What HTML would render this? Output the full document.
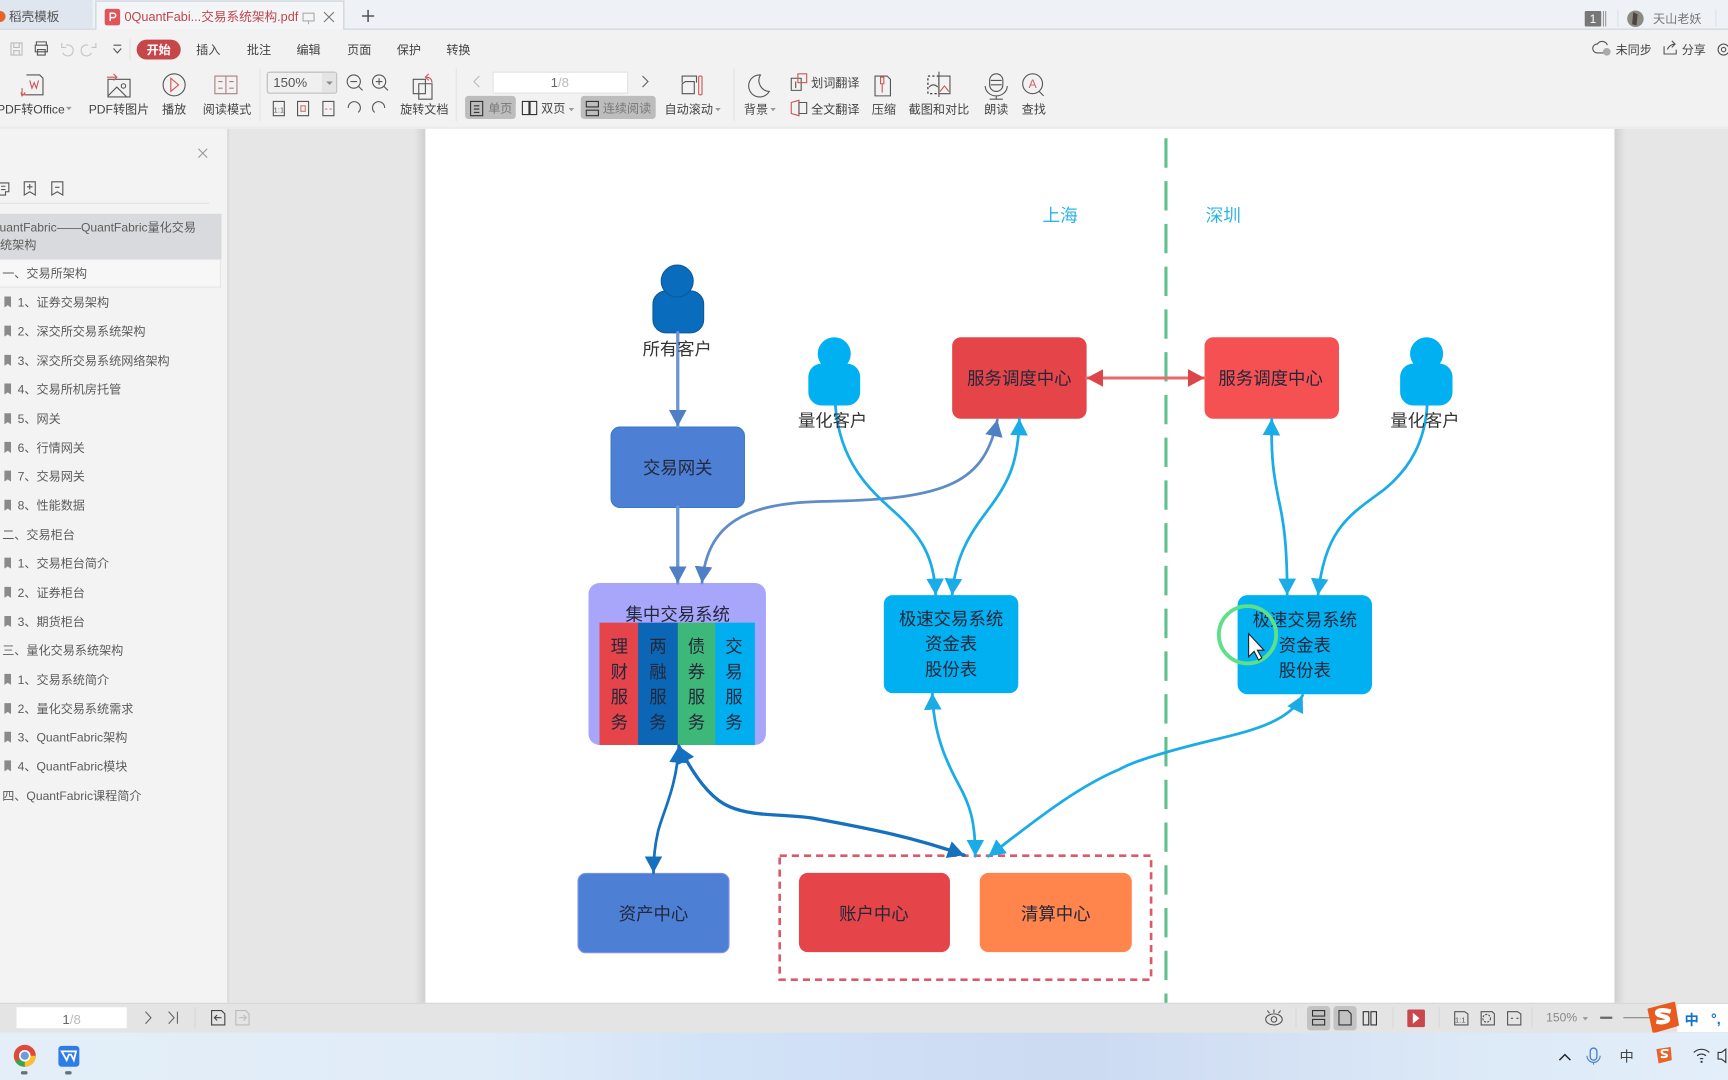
<!DOCTYPE html>
<html lang="zh">
<head>
<meta charset="utf-8">
<title>0QuantFabric 交易系统架构</title>
<style>
html,body{margin:0;padding:0;width:1728px;height:1080px;overflow:hidden;background:#e6e6e6}
svg{display:block;font-family:"Liberation Sans","Noto Sans CJK SC",sans-serif;filter:blur(.35px)}
.t{font-size:11px;fill:#444;text-anchor:middle}
.s{font-size:11px;fill:#5c5c5c}
.d{font-size:15.8px;fill:#23273a;text-anchor:middle}
.i{fill:none;stroke:#555;stroke-width:1}
.r{fill:none;stroke:#c55;stroke-width:1}
.bm{fill:#8a8a8a}
</style>
</head>
<body>
<svg width="1728" height="1080" viewBox="0 0 1568 980" xmlns="http://www.w3.org/2000/svg">
<defs>
<linearGradient id="task" x1="0" x2="1" y1="0" y2="0">
<stop offset="0" stop-color="#e3eef8"/><stop offset=".28" stop-color="#e0ecf8"/><stop offset=".42" stop-color="#d2e2f7"/><stop offset=".62" stop-color="#ccdaf2"/><stop offset=".85" stop-color="#dce9f7"/><stop offset="1" stop-color="#e3eef9"/>
</linearGradient>
<linearGradient id="shL" x1="0" x2="1" y1="0" y2="0"><stop offset="0" stop-color="#e6e6e6"/><stop offset="1" stop-color="#cfcfcf"/></linearGradient>
<linearGradient id="shR" x1="0" x2="1" y1="0" y2="0"><stop offset="0" stop-color="#cfcfcf"/><stop offset="1" stop-color="#e6e6e6"/></linearGradient>
<marker id="c" markerUnits="userSpaceOnUse" markerWidth="18" markerHeight="18" refX="15" refY="8" orient="auto-start-reverse"><path d="M0 0L15 8L0 16z" fill="#19ace6"/></marker>
<marker id="k" markerUnits="userSpaceOnUse" markerWidth="18" markerHeight="18" refX="15" refY="8" orient="auto-start-reverse"><path d="M0 0L15 8L0 16z" fill="#1670c0"/></marker>
<marker id="b" markerUnits="userSpaceOnUse" markerWidth="18" markerHeight="18" refX="15" refY="8" orient="auto-start-reverse"><path d="M0 0L15 8L0 16z" fill="#4f7fc4"/></marker>
<marker id="e" markerUnits="userSpaceOnUse" markerWidth="18" markerHeight="18" refX="15" refY="8" orient="auto-start-reverse"><path d="M0 0L15 8L0 16z" fill="#dc464b"/></marker>
</defs>

<!-- base -->
<rect width="1568" height="980" fill="#e6e6e6"/>
<!-- title bar -->
<rect width="1568" height="27" fill="#eef2f6"/>
<rect y="26" width="1568" height="1" fill="#c9d0da"/>
<rect width="84" height="26" fill="#dfe6f0"/>
<circle cx="0" cy="15" r="5" fill="#e8622a"/>
<text x="8" y="19" font-size="11.5" fill="#555">稻壳模板</text>
<path d="M87 27V1H312V27" fill="#f3f5f7" stroke="#c9d0da"/>
<rect x="95" y="8" width="14" height="15" rx="2" fill="#e0555a"/>
<path d="M100 19v-7h3a2 2 0 010 4h-3" fill="none" stroke="#fff" stroke-width="1.3"/>
<text x="113" y="19" font-size="11.5" fill="#c0464a">0QuantFabi...交易系统架构.pdf</text>
<path d="M275 12h10v7h-10zM280 19v3" fill="none" stroke="#aaa"/>
<path d="M294 11l9 9M303 11l-9 9" fill="none" stroke="#777"/>
<path d="M334 9v11M328.500 14.500h11" fill="none" stroke="#555" stroke-width="1.400"/>
<rect x="1438" y="10" width="15" height="14" rx="1" fill="#777"/>
<text x="1445.500" y="21" font-size="10.500" fill="#fff" text-anchor="middle">1</text>
<path d="M1455 10v14M1457 10v14" stroke="#999" fill="none"/>
<path d="M1468 9v15M1557 9v15" stroke="#dde2e8" fill="none"/>
<circle cx="1484" cy="17" r="7.500" fill="#8d8a83"/><path d="M1482 11l4 2-1 10-4-1z" fill="#4c4640"/>
<text x="1500" y="21" font-size="11" fill="#777">天山老妖</text>

<!-- toolbar -->
<rect y="27" width="1568" height="90" fill="#f2f2f2"/>
<rect y="115" width="1568" height="2" fill="#ececec"/>
<path d="M10 39h10v11h-10zM12.500 39v4h5v-4M12.500 50v-4h5v4" fill="none" stroke="#bbb"/>
<path d="M33 41v-3h9v3M32 41h11v6h-11zM34 45h7v5h-7z" class="i"/>
<path d="M60 41a5 5 0 11-3 7M56 39v4h4" fill="none" stroke="#c4c4c4"/>
<path d="M80 41a5 5 0 103 7M87 39v4h-4" fill="none" stroke="#c4c4c4"/>
<path d="M103 41h7M103 44l3.500 4 3.500-4" class="i"/>
<path d="M118 35v20" stroke="#e2e2e2"/>
<rect x="124" y="36" width="40" height="18" rx="9" fill="#c7464a"/>
<text x="144" y="49" font-size="11" fill="#fff" text-anchor="middle" font-weight="700">开始</text>
<text class="t" x="189" y="49">插入</text><text class="t" x="235" y="49">批注</text><text class="t" x="280" y="49">编辑</text><text class="t" x="326" y="49">页面</text><text class="t" x="371" y="49">保护</text><text class="t" x="416" y="49">转换</text>
<path d="M1449 48a4 4 0 01.500-8 5 5 0 019 1M1449 48h6" class="i"/><circle cx="1458" cy="47" r="3.500" fill="#aaa"/>
<text x="1466" y="49" font-size="11" fill="#444">未同步</text>
<path d="M1510 42v7h11v-4M1513 45c1-3 4-5 7-5M1517 37l3 3-3 3" class="i"/>
<text x="1526" y="49" font-size="11" fill="#444">分享</text>
<circle cx="1564" cy="45" r="5" class="i"/><circle cx="1564" cy="45" r="2" class="i"/>

<!-- big icons -->
<path d="M24 68h12l3 3v15h-16" class="i"/><path d="M27 73l2 7 2-5 2 5 2-7" class="r"/><path d="M20 80v6h6M23 84l-3 3-1-3" class="r"/>
<text class="t" x="28" y="103">PDF转Office</text><path d="M60 97l5 0-2.500 3z" fill="#999"/>
<path d="M98 72h20v16h-20z" class="i"/><circle cx="112" cy="78" r="2" class="i"/><path d="M98 87l8-8 9 9" class="i"/><path d="M97 70h8M103 67l3 3-3 3" class="r"/>
<text class="t" x="108" y="103">PDF转图片</text>
<circle cx="158" cy="77" r="10" class="i"/><path d="M155 71l7 6-7 6z" class="r"/>
<text class="t" x="158" y="103">播放</text>
<path d="M195 69h10v16h-10zM205 69h10v16h-10zM198 74h4M198 80h4M208 74h4M208 80h4" fill="none" stroke="#aa8080"/>
<text class="t" x="206" y="103">阅读模式</text>
<path d="M236 62v48" stroke="#e4e4e4"/>
<rect x="242.500" y="65.500" width="63" height="19" rx="2" fill="#f0f0f0" stroke="#b9b9b9"/>
<rect x="292" y="66" width="13" height="18" fill="#e4e4e4"/><path d="M296 74h6l-3 3z" fill="#888"/>
<text x="248" y="79" font-size="12" fill="#555">150%</text>
<circle cx="321" cy="74" r="6" class="i"/><path d="M318 74h6M325 78l4 4" class="i"/>
<circle cx="344" cy="74" r="6" class="i"/><path d="M341 74h6M344 71v6M348 78l4 4" class="i"/>
<path d="M248 92h10v13h-10zM270 92h10v13h-10zM293 92h10v13h-10z" class="i"/>
<text x="253" y="102" font-size="7" fill="#555" text-anchor="middle">1:1</text>
<path d="M273 96h4v5h-4z" fill="none" stroke="#c77"/>
<path d="M295 99h2M299 99h2" stroke="#c77"/>
<path d="M316 98a5.500 5.500 0 119 4M340 102a5.500 5.500 0 119-4" class="i"/>
<path d="M375 72h11v13h-11zM380 76h12v14h-12z" class="i"/><path d="M387 70c3 0 5 2 5 5M389 67l-3 3 3 3" class="r"/>
<text class="t" x="385" y="103">旋转文档</text>
<path d="M414 62v48" stroke="#e4e4e4"/>
<path d="M435 69l-5 5 5 5" fill="none" stroke="#bbb"/>
<rect x="447.500" y="65.500" width="122" height="19" fill="#fff" stroke="#e2e2e2"/>
<text x="508" y="79" font-size="12" fill="#666" text-anchor="middle">1<tspan fill="#bbb">/8</tspan></text>
<path d="M583 69l5 5-5 5" fill="none" stroke="#666"/>
<rect x="422" y="87" width="46" height="21" rx="3" fill="#bdbdbd"/>
<path d="M427 92h11v13h-11zM430 96h5M430 99h5M430 102h5" fill="none" stroke="#333"/>
<text x="443" y="102" font-size="11" fill="#777">单页</text>
<path d="M474 92h6v12h-6zM481 92h6v12h-6z" fill="none" stroke="#333"/>
<text x="491" y="102" font-size="11" fill="#444">双页</text><path d="M516 98h5l-2.500 3z" fill="#999"/>
<rect x="527" y="87" width="68" height="21" rx="3" fill="#bdbdbd"/>
<path d="M532 92h11v5h-11zM532 100h11v5h-11z" fill="none" stroke="#333"/>
<text x="547" y="102" font-size="11" fill="#777">连续阅读</text>
<path d="M619 75v-6h13v6M619 85v-9l3-2h8v11z" class="i"/><rect x="634" y="69" width="3" height="17" rx="1" class="r"/>
<text class="t" x="625" y="103">自动滚动</text><path d="M649 98h5l-2.500 3z" fill="#999"/>
<path d="M666 62v48" stroke="#e4e4e4"/>
<path d="M690 68a10 10 0 1 0 8 15a10 10 0 0 1-8-15z" class="i"/>
<text class="t" x="686" y="103">背景</text><path d="M699 98h5l-2.500 3z" fill="#999"/>
<path d="M718 71h9v11h-9zM722 74v6" class="i"/><rect x="724" y="67" width="8" height="8" class="r"/>
<path d="M718 93l7-2v14l-7-2z" class="r"/><path d="M725 93h7v10h-7z" class="i"/>
<text x="736" y="79" font-size="11" fill="#444">划词翻译</text>
<text x="736" y="103" font-size="11" fill="#444">全文翻译</text>
<path d="M794 69h11l3 3v15h-14z" class="i"/><path d="M799 70h3v6h-3zM800.500 76v8" class="r"/>
<text class="t" x="802" y="103">压缩</text>
<path d="M842 69h10v16h-10z" fill="none" stroke="#222" stroke-dasharray="2 2"/><path d="M852 69h10v16h-10z" class="i"/><path d="M852 65v23" class="i"/><path d="M853 83l4-5 4 5" class="r"/><path d="M843 79q4-4 8 0" class="i"/>
<text class="t" x="852" y="103">截图和对比</text>
<rect x="898" y="67" width="12" height="16" rx="6" class="i"/><path d="M894 78a10 9 0 0020 0M904 87v3M898 90h12M899 73h10M899 77h10" class="i"/>
<text class="t" x="904" y="103">朗读</text>
<circle cx="937" cy="76" r="9" class="i"/><path d="M943 83l4 4" class="i" stroke-width="2"/>
<text x="937" y="80" font-size="11" fill="#c66" text-anchor="middle">A</text>
<text class="t" x="938" y="103">查找</text>

<!-- sidebar -->
<rect y="117" width="206" height="793" fill="#f3f3f3"/>
<rect x="206" y="117" width="2" height="793" fill="#dcdcdc"/>
<path d="M180 135l8 8M188 135l-8 8" fill="none" stroke="#999"/>
<path d="M-3 166h11v8h-3v3h-5M1 169h4M1 172h4" class="i" />
<path d="M22 165h10v12l-5-3-5 3zM27 167v5M24.500 169.500h5" class="i"/>
<path d="M47 165h10v12l-5-3-5 3zM50 170h4" class="i"/>
<path d="M0 184.500h190" stroke="#e2e2e2"/>
<rect y="194" width="201" height="41" fill="#d9dadd"/>
<text class="s" x="-9" y="210">QuantFabric——QuantFabric量化交易</text>
<text class="s" x="-11" y="226">系统架构</text>
<rect x="-1" y="235.500" width="201" height="25" fill="#f7f7f7" stroke="#e6e6e6"/>
<text class="s" x="2" y="252">一、交易所架构</text>
<path class="bm" d="M4 269h6v10l-3-2-3 2zM4 295.500h6v10l-3-2-3 2zM4 322h6v10l-3-2-3 2zM4 348h6v10l-3-2-3 2zM4 375h6v10l-3-2-3 2zM4 401h6v10l-3-2-3 2zM4 427h6v10l-3-2-3 2zM4 453.500h6v10l-3-2-3 2zM4 506h6v10l-3-2-3 2zM4 532.500h6v10l-3-2-3 2zM4 559h6v10l-3-2-3 2zM4 611.500h6v10l-3-2-3 2zM4 638h6v10l-3-2-3 2zM4 664h6v10l-3-2-3 2zM4 690h6v10l-3-2-3 2z"/>
<text class="s" x="16" y="278">1、证券交易架构</text>
<text class="s" x="16" y="304.500">2、深交所交易系统架构</text>
<text class="s" x="16" y="331">3、深交所交易系统网络架构</text>
<text class="s" x="16" y="357">4、交易所机房托管</text>
<text class="s" x="16" y="384">5、网关</text>
<text class="s" x="16" y="410">6、行情网关</text>
<text class="s" x="16" y="436">7、交易网关</text>
<text class="s" x="16" y="462.500">8、性能数据</text>
<text class="s" x="2" y="489">二、交易柜台</text>
<text class="s" x="16" y="515">1、交易柜台简介</text>
<text class="s" x="16" y="541.500">2、证券柜台</text>
<text class="s" x="16" y="568">3、期货柜台</text>
<text class="s" x="2" y="594">三、量化交易系统架构</text>
<text class="s" x="16" y="620.500">1、交易系统简介</text>
<text class="s" x="16" y="647">2、量化交易系统需求</text>
<text class="s" x="16" y="673">3、QuantFabric架构</text>
<text class="s" x="16" y="699">4、QuantFabric模块</text>
<text class="s" x="2" y="726">四、QuantFabric课程简介</text>

<!-- page -->
<rect x="376" y="117" width="10" height="793" fill="url(#shL)"/>
<rect x="1465" y="117" width="10" height="793" fill="url(#shR)"/>
<rect x="386" y="117" width="1079" height="793" fill="#fff"/>

<path d="M1058 125.500V910" stroke="#5fc08c" stroke-width="2.800" fill="none" stroke-dasharray="26.700 12.100"/>
<text x="962" y="201" font-size="16" fill="#2db4e6" text-anchor="middle">上海</text>
<text x="1110" y="201" font-size="16" fill="#2db4e6" text-anchor="middle">深圳</text>

<!-- nodes -->
<rect x="592.500" y="264" width="46" height="38" rx="12" fill="#0a6cbc" stroke="#0a5a9c"/>
<circle cx="614.500" cy="255" r="14.500" fill="#0a6cbc" stroke="#0a5a9c"/>
<rect x="733.500" y="330" width="47" height="38" rx="12" fill="#00b0f0"/><circle cx="757" cy="321" r="15" fill="#00b0f0"/>
<rect x="1270.500" y="330" width="47.500" height="38" rx="12" fill="#00b0f0"/><circle cx="1294.500" cy="321" r="15" fill="#00b0f0"/>

<rect x="864" y="306" width="122" height="74" rx="8" fill="#e54448"/>
<rect x="1093" y="306" width="122" height="74" rx="8" fill="#f55052"/>
<rect x="554.500" y="387.500" width="121" height="73" rx="8" fill="#4d80d5" stroke="#3a7ac4"/>
<rect x="534" y="529" width="161" height="147" rx="10" fill="#a8a6fb"/>
<text class="d" x="615" y="563">集中交易系统</text>
<rect x="544" y="565" width="36" height="111" fill="#e5444b"/>
<rect x="579" y="565" width="37" height="111" fill="#0b66b5"/>
<rect x="615" y="565" width="35" height="111" fill="#3db878"/>
<rect x="649" y="565" width="36" height="111" fill="#00aeef"/>
<text class="d" x="562" y="592">理</text><text class="d" x="562" y="615">财</text><text class="d" x="562" y="638">服</text><text class="d" x="562" y="661">务</text>
<text class="d" x="597" y="592">两</text><text class="d" x="597" y="615">融</text><text class="d" x="597" y="638">服</text><text class="d" x="597" y="661">务</text>
<text class="d" x="632" y="592">债</text><text class="d" x="632" y="615">券</text><text class="d" x="632" y="638">服</text><text class="d" x="632" y="661">务</text>
<text class="d" x="666" y="592">交</text><text class="d" x="666" y="615">易</text><text class="d" x="666" y="638">服</text><text class="d" x="666" y="661">务</text>
<rect x="802" y="540" width="122" height="89" rx="8" fill="#00b0f0"/>
<rect x="1123" y="540" width="122" height="90" rx="9" fill="#00b0f0"/>
<rect x="524.500" y="792.500" width="137" height="72" rx="7" fill="#4d80d5" stroke="#7d92ec"/>
<rect x="725" y="792" width="137" height="72" rx="8" fill="#e54448"/>
<rect x="889" y="792" width="138" height="72" rx="8" fill="#ff854c"/>
<rect x="707.500" y="776.500" width="337" height="112.500" fill="none" stroke="#dc5a68" stroke-width="2.400" stroke-dasharray="6.500 4.500"/>

<!-- arrows -->
<g fill="none" stroke-linecap="round">
<path d="M615 302V387" stroke="#6d95cf" stroke-width="3" marker-end="url(#b)"/>
<path d="M615 460V529" stroke="#6d95cf" stroke-width="3" marker-end="url(#b)"/>
<path d="M637 529C642 475 675 456 750 455C860 453 893 438 905 381" stroke="#5f8cc6" stroke-width="2.500" marker-start="url(#b)" marker-end="url(#b)"/>
<path d="M758 368C762 420 790 445 810 463C835 485 848 505 849 540" stroke="#19ace6" stroke-width="2.500" marker-end="url(#c)"/>
<path d="M864 540C867 500 885 478 900 458C915 437 924 420 925 380" stroke="#19ace6" stroke-width="2.500" marker-start="url(#c)" marker-end="url(#c)"/>
<path d="M986 343H1093" stroke="#e96a6c" stroke-width="2.800" marker-start="url(#e)" marker-end="url(#e)"/>
<path d="M1154 380C1153 420 1157 436 1160 452C1164 470 1168 490 1168 540" stroke="#19ace6" stroke-width="2.500" marker-start="url(#c)" marker-end="url(#c)"/>
<path d="M1295 368C1293 400 1280 425 1255 445C1225 467 1202 480 1196 540" stroke="#19ace6" stroke-width="2.500" marker-end="url(#c)"/>
<path d="M846 629C847 665 858 690 870 712C880 730 885 745 885 777" stroke="#19ace6" stroke-width="2.500" marker-start="url(#c)" marker-end="url(#c)"/>
<path d="M1182 631C1170 655 1135 663 1107 670C1065 680 1030 690 1016 698C975 715 935 748 897 777" stroke="#19ace6" stroke-width="2.500" marker-start="url(#c)" marker-end="url(#c)"/>
<path d="M616 677C630 705 645 725 662 732C685 742 715 738 741 743C790 752 830 760 875 776" stroke="#1670c0" stroke-width="3" marker-start="url(#k)" marker-end="url(#k)"/>
<path d="M616 677C614 715 601 738 597 755C594 768 593 780 593 792" stroke="#1670c0" stroke-width="2.500" marker-start="url(#k)" marker-end="url(#k)"/>
</g>

<text x="614.500" y="322" font-size="15.700" fill="#333" text-anchor="middle">所有客户</text>
<text x="755.500" y="387" font-size="15.700" fill="#333" text-anchor="middle">量化客户</text>
<text x="1293" y="387" font-size="15.700" fill="#333" text-anchor="middle">量化客户</text>
<text class="d" x="925" y="349">服务调度中心</text>
<text class="d" x="1153" y="349">服务调度中心</text>
<text class="d" x="615" y="430">交易网关</text>
<text class="d" x="863" y="567">极速交易系统</text><text class="d" x="863" y="590">资金表</text><text class="d" x="863" y="613">股份表</text>
<text class="d" x="593" y="835">资产中心</text><text class="d" x="793" y="835">账户中心</text><text class="d" x="958" y="835">清算中心</text>
<text class="d" x="1184" y="568">极速交易系统</text><text class="d" x="1184" y="591">资金表</text><text class="d" x="1184" y="614">股份表</text>
<circle cx="1132" cy="576" r="26" fill="none" stroke="#5ee08a" stroke-width="3.500"/>
<path d="M1133 575V596L1138 591L1142 599L1145 597L1141 590H1147Z" fill="#fff" stroke="#222" stroke-width="1"/>

<!-- status bar -->
<rect y="910" width="1568" height="27" fill="#e4e4e4"/>
<rect y="910" width="1568" height="1" fill="#d8d8d8"/>
<rect x="15" y="914" width="100" height="19" fill="#fff"/>
<text x="65" y="929" font-size="12" fill="#666" text-anchor="middle">1<tspan fill="#bbb">/8</tspan></text>
<path d="M132 918l5 5.500-5 5.500M153 918l5 5.500-5 5.500M161 918v11" fill="none" stroke="#666"/>
<path d="M177 914v19" stroke="#d6d6d6"/>
<path d="M192 917h9l3 3v10h-12zM201 923.500h-6M197 921l-2.500 2.500 2.500 2.500" fill="none" stroke="#444"/>
<path d="M214 917h9l3 3v10h-12zM217 923.500h6M221 921l2.500 2.500-2.500 2.500" fill="none" stroke="#bbb"/>
<ellipse cx="1156" cy="925" rx="7.500" ry="5" class="i"/><circle cx="1156" cy="925" r="2.500" class="i"/><path d="M1150 917l2 2.500M1156 916v3M1162 917l-2 2.500" class="i"/>
<path d="M1176 914v19M1264 914v19M1306 914v19M1390 914v19" stroke="#d8d8d8"/>
<rect x="1186" y="913" width="21" height="22" rx="3" fill="#c2c2c2"/>
<rect x="1210" y="913" width="21" height="22" rx="3" fill="#c2c2c2"/>
<path d="M1191 917h11v5h-11zM1191 925h11v5h-11zM1215 917h8l3 3v10h-11zM1237 918h5v12h-5zM1244 918h5v12h-5z" fill="none" stroke="#333"/>
<rect x="1277" y="916" width="16" height="16" rx="1.500" fill="#c9464b"/><path d="M1282 919l6 5-6 5z" fill="#fff"/>
<path d="M1320 918h9l3 2v10h-12zM1344 918h10l2 2v10h-12zM1368 918h9l3 2v10h-12z" class="i"/>
<text x="1325" y="928" font-size="7" fill="#555" text-anchor="middle">1:1</text>
<circle cx="1349" cy="924" r="3.500" class="i" stroke-dasharray="2 1"/>
<path d="M1371 924h2M1376 924h2" class="i"/>
<text x="1403" y="927" font-size="11" fill="#888">150%</text><path d="M1436 923h5l-2.500 3z" fill="#999"/>
<path d="M1452 923.500h11" stroke="#666" stroke-width="2"/>
<path d="M1473 923.500h24" stroke="#888"/>
<rect x="1522" y="911" width="46" height="25.500" fill="#fff"/>
<path d="M1496 916l23-6 3.500 20-22 6.500z" fill="#e85a20" stroke="#e85a20" stroke-width="2" stroke-linejoin="round"/>
<path d="M1516 918c-10-3-15 0-11 3l7 2c4 2 0 6-9 4" fill="none" stroke="#fff" stroke-width="4"/>
<text x="1535" y="930" font-size="13" fill="#1572d1" text-anchor="middle" font-weight="700">中</text>
<text x="1557" y="929" font-size="13" fill="#1572d1" text-anchor="middle" font-weight="700">°,</text>

<!-- taskbar -->
<rect y="937" width="1568" height="43" fill="url(#task)"/>
<circle cx="22.500" cy="958" r="10" fill="#e0483a"/>
<path d="M22.500 958L14 963.500A10 10 0 0 0 22.500 968z" fill="#36a64f"/>
<path d="M22.500 958V968A10 10 0 0 0 32.500 958z" fill="#fbc02d"/>
<circle cx="22.500" cy="958" r="4.500" fill="#6f9bdc" stroke="#fff" stroke-width="1.500"/>
<rect x="53" y="949" width="19" height="19" rx="3" fill="#2d7de8"/>
<path d="M56 954h13l-2 8-2.500-5-2 0-2 5z" fill="none" stroke="#fff" stroke-width="1.600"/>
<rect x="19" y="972" width="6" height="3" rx="1.500" fill="#6a7078"/><rect x="59" y="972" width="6" height="3" rx="1.500" fill="#6a7078"/>
<path d="M1415 962l5-5 5 5" fill="none" stroke="#222" stroke-width="1.300"/>
<rect x="1443" y="951" width="6" height="11" rx="3" fill="none" stroke="#4a80c8" stroke-width="1.200"/><path d="M1440 958a6 6 0 0012 0M1446 964v2" fill="none" stroke="#4a80c8"/>
<text x="1476" y="963" font-size="13" fill="#444" text-anchor="middle">中</text>
<path d="M1503 952l13-2 1 12-12 3z" fill="#e8622a"/><path d="M1514 953c-6-1-8 1-5 3l3 1c2 1 0 3-5 2" fill="none" stroke="#fff" stroke-width="1.800"/>
<path d="M1537 955a10 10 0 0114 0M1540 958a6 6 0 018 0M1542.500 961a2.500 2.500 0 013 0" fill="none" stroke="#333" stroke-width="1.100"/><circle cx="1544" cy="963.500" r="1" fill="#333"/>
<path d="M1559 955h3l4-3v12l-4-3h-3z" fill="none" stroke="#333"/>
</svg>
</body>
</html>
